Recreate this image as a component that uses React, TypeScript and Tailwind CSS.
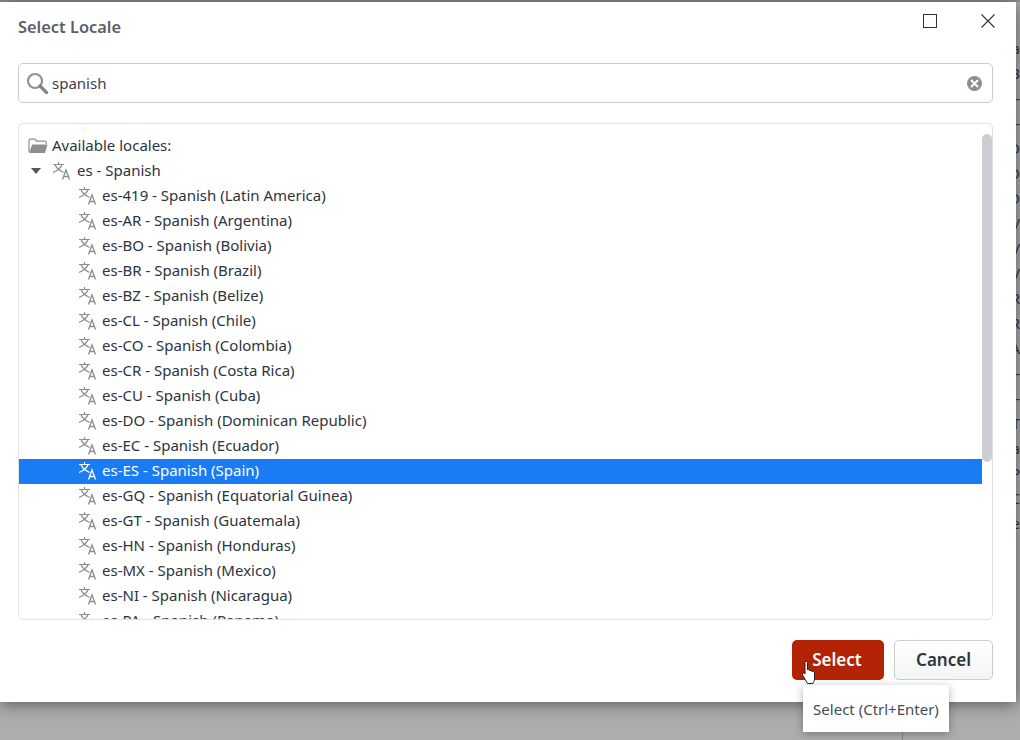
import React from 'react';

const locales = [
  'es-419 - Spanish (Latin America)',
  'es-AR - Spanish (Argentina)',
  'es-BO - Spanish (Bolivia)',
  'es-BR - Spanish (Brazil)',
  'es-BZ - Spanish (Belize)',
  'es-CL - Spanish (Chile)',
  'es-CO - Spanish (Colombia)',
  'es-CR - Spanish (Costa Rica)',
  'es-CU - Spanish (Cuba)',
  'es-DO - Spanish (Dominican Republic)',
  'es-EC - Spanish (Ecuador)',
  'es-ES - Spanish (Spain)',
  'es-GQ - Spanish (Equatorial Guinea)',
  'es-GT - Spanish (Guatemala)',
  'es-HN - Spanish (Honduras)',
  'es-MX - Spanish (Mexico)',
  'es-NI - Spanish (Nicaragua)',
  'es-PA - Spanish (Panama)',
];

// bits of the page behind the dialog that stick out at the right edge
const behind = ['a', 'B', '-', '-', 'D', 'D', 'D', 'V', 'V', 'V', 'R', 'R', 'A', '-', '-', 'T', 'a', 'P', 'C', 'e'];

const TranslateIcon = ({ active }: { active?: boolean }) => (
  <svg width="19" height="19" viewBox="0 0 19 19" fill="none" stroke={active ? '#ffffff' : '#8e8e8e'} strokeWidth="1.2" className="shrink-0">
    <path d="M1 3.500h11M6.500 1v2.500M3 3.500c1 3.500 4.500 6 8.500 8M10 3.500c-1 3.500-4.500 6-9 8" />
    <path d="M10.500 18.500 14 9l3.500 9.500M11.700 15.500h4.600" strokeWidth="1.3" />
  </svg>
);

const Row = ({ label, active }: { label: string; active?: boolean }) => (
  <div className={`mr-[10px] flex h-[25px] shrink-0 items-center gap-[5px] pb-[2px] pl-[59px] ${active ? 'bg-[#1a7cf2] text-white' : ''}`}>
    <TranslateIcon active={active} />
    <span>{label}</span>
  </div>
);

export default function App() {
  return (
    <div className="relative h-[740px] w-[1020px] overflow-hidden bg-[#adadad] font-['Noto_Sans',sans-serif] text-[15px] text-[#2c3440]">
      <div className="absolute right-0 top-[36px] flex flex-col text-right text-[15px] text-[#333a44]">
        {behind.map((c, i) => (
          <span key={i} className="h-[25px] leading-[25px]">{c}</span>
        ))}
      </div>
      <div className="absolute left-0 top-0 h-[2px] w-full bg-[#8f8f8f]" />
      <div className="absolute left-[902px] top-[732px] h-[8px] w-px bg-[#8a8a8a]" />

      <div className="relative mt-[2px] flex h-[700px] w-[1016px] flex-col bg-white shadow-[0_2px_15px_rgba(0,0,0,0.5)]">
        <div className="flex h-[61px] shrink-0 items-start justify-between pl-[18px] pr-[21px] pt-[12px]">
          <span className="mt-[1px] text-[16.4px] font-semibold text-[#5b5f66]">Select Locale</span>
          <div className="flex items-center gap-[44px]">
            <div className="h-[14px] w-[14px] border-[1.5px] border-[#2c3440]" />
            <svg width="14" height="14" viewBox="0 0 14 14" stroke="#2c3440" strokeWidth="1.1">
              <path d="M0.500 0.500 13.500 13.500M13.500 0.500 0.500 13.500" />
            </svg>
          </div>
        </div>

        <div className="ml-[18px] mr-[23px] flex h-[40px] shrink-0 items-center rounded-[5px] border border-[#cccccc] pl-[7px] pr-[10px]">
          <svg width="22" height="22" viewBox="0 0 22 22" fill="none" className="shrink-0">
            <circle cx="9" cy="9" r="7" stroke="#8b929b" strokeWidth="2.2" />
            <path d="M14 14l6.500 6.500" stroke="#858585" strokeWidth="3.2" strokeLinecap="round" />
          </svg>
          <span className="ml-[4px] flex-1 text-[#3a414c]">spanish</span>
          <span className="flex h-[15px] w-[15px] items-center justify-center rounded-full bg-[#8a8f96]">
            <svg width="9" height="9" viewBox="0 0 9 9" stroke="#ffffff" strokeWidth="2">
              <path d="M1 1l7 7M8 1 1 8" />
            </svg>
          </span>
        </div>

        <div className="relative ml-[18px] mr-[23px] mt-[20px] flex h-[497px] shrink-0 flex-col overflow-hidden rounded-[5px] border border-[#e2e2e2] pt-[10px]">
          <div className="flex h-[25px] shrink-0 items-center gap-[4px] pb-[2px] pl-[9px]">
            <svg width="20" height="16" viewBox="0 0 20 16" className="shrink-0">
              <path d="M1 14V2.500C1 1.700 1.600 1.200 2.300 1.200H7l1.500 2H17c.8 0 1.300.5 1.300 1.200V6" fill="none" stroke="#8e8e8e" strokeWidth="1.200" />
              <path d="M1 15 4.200 6.500H19.500L17 15z" fill="#8e8e8e" />
            </svg>
            <span>Available locales:</span>
          </div>
          <div className="flex h-[25px] shrink-0 items-center pb-[2px] pl-[12px]">
            <span className="h-0 w-0 border-x-[5px] border-t-[6px] border-x-transparent border-t-[#555555]" />
            <span className="ml-[11px]"><TranslateIcon /></span>
            <span className="ml-[6px]">es - Spanish</span>
          </div>
          {locales.map((l) => (
            <Row key={l} label={l} active={l.startsWith('es-ES')} />
          ))}
          <div className="absolute right-0 top-[10px] h-[328px] w-[10px] rounded-full bg-[#cdced2]" />
        </div>

        <div className="mr-[23px] mt-[20px] flex justify-end gap-[10px]">
          <button className="h-[40px] w-[92px] rounded-[5px] bg-[#b32205] pr-[2px] text-[17px] font-semibold text-white">Select</button>
          <button className="h-[40px] w-[99px] rounded-[5px] border border-[#cccccc] bg-gradient-to-b from-white to-[#f3f4f7] text-[17px] font-semibold text-[#2c3440]">Cancel</button>
        </div>
      </div>

      <div className="absolute left-[803px] top-[685px] flex h-[47px] w-[146px] items-center justify-center bg-white pt-[2px] text-[#444b55] shadow-[0_2px_8px_rgba(0,0,0,0.3)]">
        Select (Ctrl+Enter)
      </div>
      <svg className="absolute left-[801px] top-[660px]" width="18" height="26" viewBox="0 0 18 26">
        <path d="M4 2.500c0-1.500 2.500-1.500 2.500 0V10c0-1 2.300-1 2.300 0v1c0-1 2.300-1 2.300 0v1c0-1 2.400-1 2.400.3V19c0 2-1 3-1.500 4.500H6.500L1.500 15c-1-2 1-3 2.500-1z" fill="#ffffff" stroke="#222222" strokeWidth="1" />
      </svg>
    </div>
  );
}
